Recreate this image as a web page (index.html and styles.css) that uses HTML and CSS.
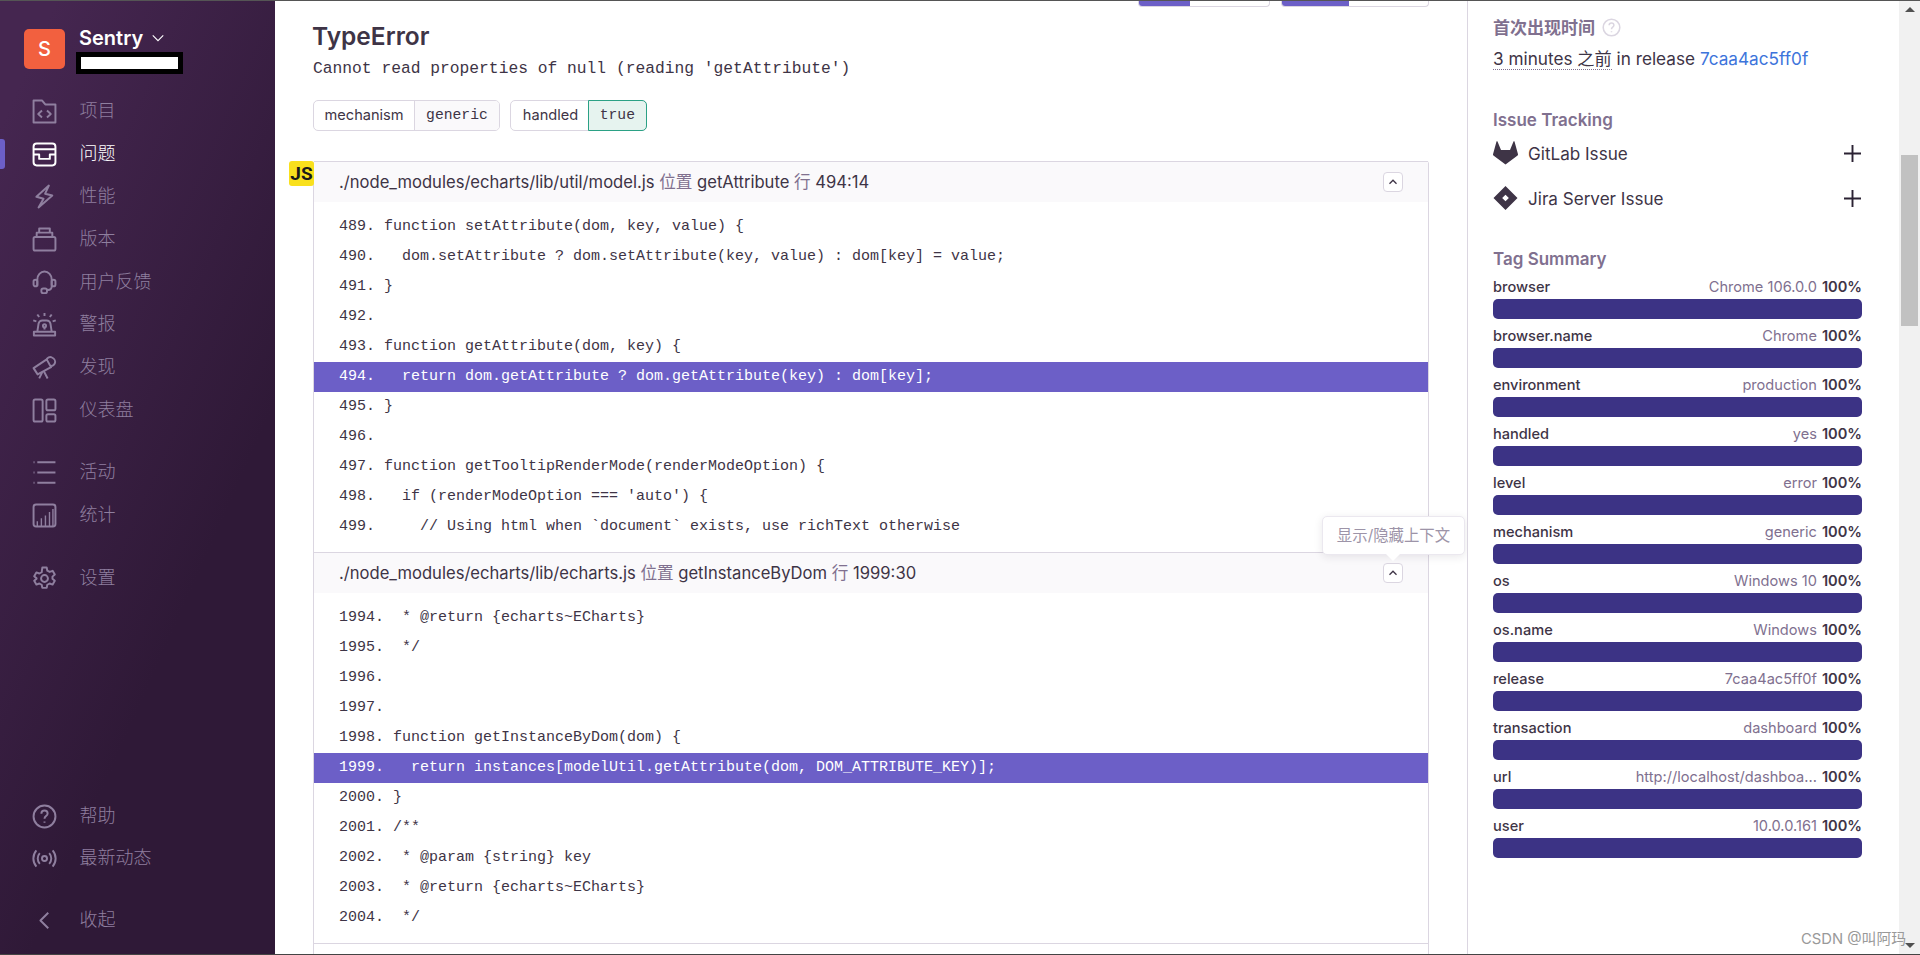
FILE: index.html
```html
<!DOCTYPE html>
<html lang="zh-CN">
<head>
  <meta charset="UTF-8">
  <title>TypeError - Sentry</title>
  <link rel="stylesheet" href="styles.css">
</head>
<body>
  <div class="page">
    <nav class="sidebar">
      <div class="org">
        <div class="org-avatar">S</div>
        <div class="org-text">
          <div class="org-name">Sentry
            <svg class="org-chevron" viewBox="0 0 16 16"><path d="M2 5l6 6 6-6"/></svg>
          </div>
          <div class="org-mask"><div class="org-mask-inner"></div></div>
        </div>
      </div>

      <div class="nav-group">
        <a class="nav-item">
          <svg class="nav-icon" viewBox="0 0 16 16"><path d="M1 15V1h5.5l2 2.5H15V15z"/><path d="M6.4 7.4L4 9.6l2.4 2.2M9.6 7.4L12 9.6l-2.4 2.2"/></svg>
          <span>项目</span>
        </a>
        <a class="nav-item active">
          <div class="nav-marker"></div>
          <svg class="nav-icon" viewBox="0 0 16 16"><rect x="1" y="1" width="14" height="14" rx="2"/><path d="M1 4.6h14M1 8h3.6v2.8h6.8V8H15"/></svg>
          <span>问题</span>
        </a>
        <a class="nav-item">
          <svg class="nav-icon" viewBox="0 0 16 16"><path d="M10.8 1L2.8 8.2l4.6 1.2L4.2 15l8.8-7.600-4.600-1.200z"/></svg>
          <span>性能</span>
        </a>
        <a class="nav-item">
          <svg class="nav-icon" viewBox="0 0 16 16"><rect x="1" y="6.4" width="14" height="8.6" rx="1"/><path d="M3 6.4V3.6h10v2.8M4.6 3.6V1h6.8v2.6"/></svg>
          <span>版本</span>
        </a>
        <a class="nav-item">
          <svg class="nav-icon" viewBox="0 0 16 16"><path d="M3.4 10.4V6a4.6 5 0 0 1 9.2 0v4.4c0 1.4-1 2.4-2.4 2.4H9"/><rect x="1" y="6.2" width="2.4" height="4.2" rx="1.2"/><rect x="12.6" y="6.2" width="2.4" height="4.2" rx="1.2"/><rect x="6" y="11.8" width="3.6" height="3" rx="1.2"/></svg>
          <span>用户反馈</span>
        </a>
        <a class="nav-item">
          <svg class="nav-icon" viewBox="0 0 16 16"><path d="M1.2 15v-2.4h13.6V15zM3.4 12.6l.8-5.2c.3-1.2 1.2-2 2.4-2h2.8c1.2 0 2.1.8 2.4 2l.8 5.200"/><circle cx="8" cy="8.800" r="1"/><path d="M8 9.800v1.400M8 .6v2M3.4 1.600l1.200 1.600M12.600 1.600l-1.200 1.600M.8 5.400l2 .6M15.200 5.400l-2 .6"/></svg>
          <span>警报</span>
        </a>
        <a class="nav-item">
          <svg class="nav-icon" viewBox="0 0 16 16"><path d="M1 8.400l8.400-5.600 2.800 5-8.600 4.600z"/><path d="M9.200 3.200c.6-1.600 2.200-2.400 3.600-1.600 1.600.8 2.400 2.400 1.800 3.800-.4 1-1.400 1.600-2.400 1.600"/><path d="M6.600 11l-2 4M7.600 10.400l2.400 4.600"/></svg>
          <span>发现</span>
        </a>
        <a class="nav-item">
          <svg class="nav-icon" viewBox="0 0 16 16"><rect x="1" y="1" width="5.8" height="14" rx="1"/><rect x="9.2" y="1" width="5.8" height="6.8" rx="1"/><rect x="9.2" y="10.4" width="5.8" height="4.6" rx="1"/></svg>
          <span>仪表盘</span>
        </a>
      </div>

      <div class="nav-group">
        <a class="nav-item">
          <svg class="nav-icon" viewBox="0 0 16 16"><path d="M3.400 1.400H15M3.400 8H15M3.400 14.600H15M1 1.400h.6M1 8h.6M1 14.600h.6"/></svg>
          <span>活动</span>
        </a>
        <a class="nav-item">
          <svg class="nav-icon" viewBox="0 0 16 16"><rect x="1" y="1" width="14" height="14" rx="1.6"/><path d="M3.400 15v-3.400M6 15V9.800M8.600 15V8M11.200 15V5.800M13.400 15V3.800" class="nav-thin"/></svg>
          <span>统计</span>
        </a>
      </div>

      <div class="nav-group">
        <a class="nav-item">
          <svg class="nav-icon" viewBox="0 0 16 16"><path d="M6.600 1h2.800l.4 2 1.500.8 1.900-.7 1.400 2.400-1.500 1.300v1.400l1.500 1.300-1.400 2.400-1.900-.7-1.500.8-.4 2H6.600l-.4-2-1.500-.8-1.900.7-1.400-2.400 1.500-1.300V7.800L1.400 6.500l1.400-2.400 1.900.7 1.500-.8z"/><circle cx="8" cy="8" r="2.200"/></svg>
          <span>设置</span>
        </a>
      </div>

      <div class="nav-group nav-bottom">
        <a class="nav-item">
          <svg class="nav-icon" viewBox="0 0 16 16"><circle cx="8" cy="8" r="7"/><path d="M6 6.200c0-1.200.9-2 2-2s2 .8 2 1.900c0 1.700-2 1.600-2 3.300"/><path d="M8 11.200v.8"/></svg>
          <span>帮助</span>
        </a>
        <a class="nav-item">
          <svg class="nav-icon" viewBox="0 0 16 16"><circle cx="8" cy="8" r="1.600"/><path d="M5 4.600a5 5 0 0 0 0 6.800M11 4.600a5 5 0 0 1 0 6.800M2.800 2.800a8 8 0 0 0 0 10.400M13.200 2.800a8 8 0 0 1 0 10.400"/></svg>
          <span>最新动态</span>
        </a>
        <a class="nav-item nav-collapse">
          <svg class="nav-icon" viewBox="0 0 16 16"><path d="M10.400 3L5.400 8l5 5"/></svg>
          <span>收起</span>
        </a>
      </div>
    </nav>

    <main class="content">
      <div class="view-buttons">
        <div class="view-btn view-btn-first"><div class="view-on view-on-first"></div></div>
        <div class="view-btn view-btn-second"><div class="view-on view-on-second"></div></div>
      </div>

      <h1 class="error-type">TypeError</h1>
      <p class="error-msg">Cannot read properties of null (reading 'getAttribute')</p>

      <div class="tags">
        <div class="tag"><span class="tag-key">mechanism</span><span class="tag-value">generic</span></div>
        <div class="tag tag-handled"><span class="tag-key">handled</span><span class="tag-value tag-true">true</span></div>
      </div>

      <div class="trace">
        <div class="js-badge">JS</div>

        <div class="frame">
          <div class="frame-head">
            <div><span>./node_modules/echarts/lib/util/model.js</span> <em>位置</em> <span>getAttribute</span> <em>行</em> <span>494:14</span></div>
            <button class="frame-toggle"><svg viewBox="0 0 16 16"><path d="M4 10l4-4 4 4"/></svg></button>
          </div>
          <ol class="code">
            <li>489. function setAttribute(dom, key, value) {</li>
            <li>490.   dom.setAttribute ? dom.setAttribute(key, value) : dom[key] = value;</li>
            <li>491. }</li>
            <li>492. </li>
            <li>493. function getAttribute(dom, key) {</li>
            <li class="hit">494.   return dom.getAttribute ? dom.getAttribute(key) : dom[key];</li>
            <li>495. }</li>
            <li>496. </li>
            <li>497. function getTooltipRenderMode(renderModeOption) {</li>
            <li>498.   if (renderModeOption === 'auto') {</li>
            <li>499.     // Using html when `document` exists, use richText otherwise</li>
          </ol>
        </div>

        <div class="frame">
          <div class="frame-head">
            <div><span>./node_modules/echarts/lib/echarts.js</span> <em>位置</em> <span>getInstanceByDom</span> <em>行</em> <span>1999:30</span></div>
            <button class="frame-toggle"><svg viewBox="0 0 16 16"><path d="M4 10l4-4 4 4"/></svg></button>
            <div class="tooltip">显示/隐藏上下文</div>
          </div>
          <ol class="code">
            <li>1994.  * @return {echarts~ECharts}</li>
            <li>1995.  */</li>
            <li>1996. </li>
            <li>1997. </li>
            <li>1998. function getInstanceByDom(dom) {</li>
            <li class="hit">1999.   return instances[modelUtil.getAttribute(dom, DOM_ATTRIBUTE_KEY)];</li>
            <li>2000. }</li>
            <li>2001. /**</li>
            <li>2002.  * @param {string} key</li>
            <li>2003.  * @return {echarts~ECharts}</li>
            <li>2004.  */</li>
          </ol>
        </div>

        <div class="frame"></div>
      </div>
    </main>

    <aside class="side">
      <h3 class="side-title side-title-first">首次出现时间
        <svg class="help" viewBox="0 0 16 16"><circle cx="8" cy="8" r="7"/><path d="M6 6.200c0-1.200.9-2 2-2s2 .8 2 1.900c0 1.700-2 1.600-2 3.300M8 11.200v.8"/></svg>
      </h3>
      <p class="seen"><span class="seen-time">3 minutes 之前</span> in release <a class="link">7caa4ac5ff0f</a></p>

      <h3 class="side-title side-title-issue">Issue Tracking</h3>
      <div class="tracker">
        <svg class="tracker-icon" viewBox="0 0 25 24"><path d="M12.500 23.500L.4 14.400c-.4-.3-.5-.7-.4-1.100L3.500.6c.1-.5.8-.5 1 0L8 9h9L20.500.6c.2-.5.9-.5 1 0L25 13.300c.1.4 0 .8-.4 1.100z"/></svg>
        <span>GitLab Issue</span>
        <svg class="plus" viewBox="0 0 16 16"><path d="M8 0v16M0 8h16"/></svg>
      </div>
      <div class="tracker tracker-jira">
        <svg class="tracker-icon" viewBox="0 0 25 25"><path fill-rule="evenodd" d="M12.500 0L25 12.500 12.500 25 0 12.500zM12.500 9L9 12.500l3.500 3.500 3.500-3.500z"/></svg>
        <span>Jira Server Issue</span>
        <svg class="plus" viewBox="0 0 16 16"><path d="M8 0v16M0 8h16"/></svg>
      </div>

      <h3 class="side-title side-title-tags">Tag Summary</h3>
      <div class="tag-list">
        <div class="tag-row"><div class="tag-line"><b>browser</b><span class="tag-val">Chrome 106.0.0</span><b class="pct">100%</b></div><div class="tag-bar"></div></div>
        <div class="tag-row"><div class="tag-line"><b>browser.name</b><span class="tag-val">Chrome</span><b class="pct">100%</b></div><div class="tag-bar"></div></div>
        <div class="tag-row"><div class="tag-line"><b>environment</b><span class="tag-val">production</span><b class="pct">100%</b></div><div class="tag-bar"></div></div>
        <div class="tag-row"><div class="tag-line"><b>handled</b><span class="tag-val">yes</span><b class="pct">100%</b></div><div class="tag-bar"></div></div>
        <div class="tag-row"><div class="tag-line"><b>level</b><span class="tag-val">error</span><b class="pct">100%</b></div><div class="tag-bar"></div></div>
        <div class="tag-row"><div class="tag-line"><b>mechanism</b><span class="tag-val">generic</span><b class="pct">100%</b></div><div class="tag-bar"></div></div>
        <div class="tag-row"><div class="tag-line"><b>os</b><span class="tag-val">Windows 10</span><b class="pct">100%</b></div><div class="tag-bar"></div></div>
        <div class="tag-row"><div class="tag-line"><b>os.name</b><span class="tag-val">Windows</span><b class="pct">100%</b></div><div class="tag-bar"></div></div>
        <div class="tag-row"><div class="tag-line"><b>release</b><span class="tag-val">7caa4ac5ff0f</span><b class="pct">100%</b></div><div class="tag-bar"></div></div>
        <div class="tag-row"><div class="tag-line"><b>transaction</b><span class="tag-val">dashboard</span><b class="pct">100%</b></div><div class="tag-bar"></div></div>
        <div class="tag-row"><div class="tag-line"><b>url</b><span class="tag-val tag-url">http://localhost/dashboa...</span><b class="pct">100%</b></div><div class="tag-bar"></div></div>
        <div class="tag-row"><div class="tag-line"><b>user</b><span class="tag-val">10.0.0.161</span><b class="pct">100%</b></div><div class="tag-bar"></div></div>
      </div>
    </aside>

    <div class="scrollbar">
      <div class="scroll-up"></div>
      <div class="scroll-thumb"></div>
      <div class="scroll-down"></div>
    </div>

    <div class="watermark">CSDN @叫阿玛</div>
  </div>
</body>
</html>
```

FILE: styles.css
```css
* {
  box-sizing: border-box;
}
html, body {
  margin: 0;
  padding: 0;
  height: 100%;
  overflow: hidden;
}
body {
  font-family: Inter, "Noto Sans CJK SC", sans-serif;
  font-size: 14.6px;
  color: #3e3446;
  background: #fff;
}
.page {
  position: relative;
  display: flex;
  height: 955px;
  border-top: 1px solid #555;
  border-bottom: 1px solid #444;
}

/* left nav */
.sidebar {
  width: 275px;
  flex: none;
  display: flex;
  flex-direction: column;
  padding-bottom: 12px;
  background: linear-gradient(294deg, #2f1937 35%, #452650 92%);
}
.org {
  display: flex;
  padding: 28px 0 0 24px;
  height: 89px;
}
.org-avatar {
  width: 41px;
  height: 40px;
  border-radius: 5px;
  background: #f2603f;
  color: #fff;
  font-size: 20px;
  font-weight: 500;
  line-height: 40px;
  text-align: center;
}
.org-text {
  margin-left: 11px;
  margin-top: -3px;
}
.org-name {
  margin-left: 3px;
  height: 26px;
  color: #fff;
  font-size: 20px;
  font-weight: 600;
  line-height: 24px;
  display: flex;
  align-items: flex-start;
}
.org-chevron {
  width: 14px;
  height: 14px;
  margin-left: 8px;
  margin-top: 5px;
  fill: none;
  stroke: #fff;
  stroke-width: 1.3;
}
.org-mask {
  width: 107px;
  height: 22px;
  padding: 5px;
  background: #000;
}
.org-mask-inner {
  height: 12px;
  background: #fff;
}
.nav-group {
  display: flex;
  flex-direction: column;
  margin-bottom: 20px;
}
.nav-bottom {
  margin-top: auto;
  margin-bottom: 0;
}
.nav-item {
  position: relative;
  display: flex;
  align-items: center;
  height: 42.7px;
  padding-left: 31.5px;
  color: #8f7f9f;
  font-size: 18px;
  font-family: "Noto Sans CJK SC", sans-serif;
  font-weight: 300;
}
.nav-item span {
  margin-left: 23px;
  margin-top: -5px;
}
.nav-item.active {
  color: #fff;
}
.nav-collapse {
  margin-top: 19px;
}
.nav-marker {
  position: absolute;
  left: 0;
  top: 6px;
  width: 5px;
  height: 30px;
  border-radius: 0 3px 3px 0;
  background: #6c5fc7;
}
.nav-icon {
  width: 25px;
  height: 25px;
  flex: none;
  fill: none;
  stroke: currentColor;
  stroke-width: 1.25;
  stroke-linejoin: round;
}
.nav-thin {
  stroke-width: .9;
}

/* main column */
.content {
  width: 1192px;
  flex: none;
  padding: 0 38px;
  display: flex;
  flex-direction: column;
  overflow: hidden;
}
.view-buttons {
  display: flex;
  justify-content: flex-end;
  gap: 11px;
  height: 6px;
}
.view-btn {
  height: 6px;
  border: 1px solid #dbd6e1;
  border-top: 0;
  border-radius: 0 0 4px 4px;
  overflow: hidden;
}
.view-btn-first {
  width: 132px;
}
.view-btn-second {
  width: 148px;
}
.view-on {
  height: 6px;
  background: #6c5fc7;
}
.view-on-first {
  width: 51px;
}
.view-on-second {
  width: 67px;
}
.error-type {
  margin: 14px 0 0 -1px;
  font-size: 24.5px;
  font-weight: 600;
  line-height: 30px;
  color: #3e3446;
}
.error-msg {
  margin: 6px 0 0;
  font-family: "Liberation Mono", monospace;
  font-size: 16.3px;
  line-height: 24px;
}
.tags {
  display: flex;
  gap: 10.5px;
  margin-top: 19px;
  height: 31px;
}
.tag {
  display: flex;
  height: 31px;
  border: 1px solid #dbd6e1;
  border-radius: 5px;
  line-height: 28px;
  font-size: 14.6px;
}
.tag-key {
  padding: 0 10.5px;
  border-right: 1px solid #dbd6e1;
}
.tag-value {
  padding: 0 11px;
  background: #faf9fb;
  border-radius: 0 4px 4px 0;
  font-family: "Liberation Mono", monospace;
  font-size: 14.7px;
  line-height: 29px;
}
.tag-handled .tag-key {
  border-right: 0;
  padding-right: 9.5px;
  padding-left: 11.5px;
}
.tag-true {
  margin: -1px -1px -1px 0;
  padding: 0 11px;
  height: 31px;
  border: 1px solid #2ba185;
  border-radius: 0 5px 5px 0;
  background: #e6f3ef;
}

/* stack trace */
.trace {
  position: relative;
  margin-top: 30px;
  flex: 1;
  border-left: 1px solid #dbd6e1;
  border-right: 1px solid #dbd6e1;
  border-radius: 3px 3px 0 0;
}
.js-badge {
  position: absolute;
  left: -25px;
  top: 0;
  width: 25px;
  height: 25px;
  border-radius: 3px;
  background: #f9e01d;
  color: #1a1a1a;
  font-family: Roboto, sans-serif;
  font-size: 19px;
  font-weight: 700;
  line-height: 25px;
  text-align: center;
}
.frame {
  border-top: 1px solid #dbd6e1;
}
.frame-head {
  position: relative;
  display: flex;
  align-items: center;
  justify-content: space-between;
  height: 40px;
  padding: 0 25px 2px 25px;
  background: #faf9fb;
  font-size: 16.6px;
}
.frame-head em {
  font-style: normal;
  color: #80708f;
}
.frame-toggle {
  width: 20px;
  height: 20px;
  padding: 0;
  margin-top: 2px;
  border: 1px solid #dbd6e1;
  border-radius: 4px;
  background: #fff;
}
.frame-toggle svg {
  display: block;
  width: 14px;
  height: 14px;
  margin: auto;
  fill: none;
  stroke: #3e3446;
  stroke-width: 1.5;
}
.tooltip {
  position: absolute;
  right: -37px;
  top: -37px;
  width: 143px;
  height: 39px;
  border: 1px solid #ebe8ef;
  border-radius: 5px;
  background: #fff;
  box-shadow: 0 2px 8px rgba(43, 34, 51, .1);
  color: #9d94a8;
  font-size: 15.4px;
  line-height: 37px;
  text-align: center;
}
.tooltip::after {
  content: "";
  position: absolute;
  left: 63px;
  bottom: -7px;
  border: 7px solid transparent;
  border-bottom: 0;
  border-top-color: #fff;
}
.code {
  list-style: none;
  margin: 0;
  padding: 10px 0 10px;
  font-family: "Liberation Mono", monospace;
  font-size: 15px;
}
.code li {
  height: 30px;
  line-height: 30px;
  padding-left: 25px;
  white-space: pre;
}
.code li.hit {
  background: #6c5fc7;
  color: #fff;
}

/* right column */
.side {
  width: 432px;
  flex: none;
  padding: 0 37px 0 25px;
  border-left: 1px solid #dbd6e1;
}
.side-title {
  margin: 0;
  font-size: 17px;
  font-weight: 600;
  color: #80708f;
  line-height: 24px;
}
.side-title-first {
  display: flex;
  align-items: center;
  margin-top: 14px;
  font-weight: 700;
  font-family: "Noto Sans CJK SC", sans-serif;
}
.side-title-issue {
  margin-top: 37px;
}
.side-title-tags {
  margin-top: 37px;
}
.help {
  width: 19px;
  height: 19px;
  margin-left: 7px;
  fill: none;
  stroke: #dbd6e1;
  stroke-width: 1.3;
}
.seen {
  margin: 8px 0 0;
  font-size: 17.2px;
  line-height: 24px;
}
.seen-time {
  border-bottom: 1px dotted #80708f;
}
.link {
  color: #3d74db;
}
.tracker {
  display: flex;
  align-items: center;
  height: 24px;
  margin-top: 9px;
  font-size: 17.1px;
}
.tracker-jira {
  margin-top: 21px;
}
.tracker-icon {
  width: 25px;
  height: 24px;
  flex: none;
  margin-right: 10px;
  fill: #3e3446;
}
.plus {
  width: 17px;
  height: 17px;
  margin-left: auto;
  margin-right: 1px;
  margin-top: 1px;
  fill: none;
  stroke: #2b2233;
  stroke-width: 1.8;
}
.tag-list {
  margin-top: -1px;
}
.tag-row {
  height: 49px;
  padding-top: 7px;
}
.tag-line {
  display: flex;
  height: 20px;
  align-items: center;
  font-size: 14.6px;
}
.tag-line b {
  font-weight: 500;
}
.tag-val {
  margin-left: auto;
  color: #80708f;
}
.tag-line .pct {
  margin-left: 5px;
  font-weight: 600;
}
.tag-bar {
  height: 20px;
  margin-top: 2px;
  border-radius: 5px;
  background: #3c3385;
}

/* page scrollbar and watermark on top */
.scrollbar {
  position: absolute;
  right: 0;
  top: 0;
  bottom: 0;
  width: 21px;
  background: #f1f1f1;
}
.scroll-up, .scroll-down {
  position: absolute;
  left: 6px;
  border: 5px solid transparent;
}
.scroll-up {
  top: 6px;
  border-top: 0;
  border-bottom-color: #505050;
}
.scroll-down {
  bottom: 6px;
  border-bottom: 0;
  border-top-color: #505050;
}
.scroll-thumb {
  position: absolute;
  left: 2px;
  right: 2px;
  top: 154px;
  height: 171px;
  background: #c1c1c1;
}
.watermark {
  position: absolute;
  right: 14px;
  top: 927px;
  color: #999;
  font-size: 14.8px;
  line-height: 22px;
}
```
